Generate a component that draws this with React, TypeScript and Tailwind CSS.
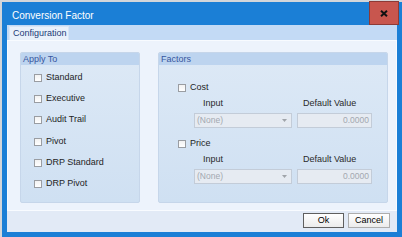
const font = { fontFamily: '"Liberation Sans", Arial, sans-serif' };

const Box = () => (
  <span className="inline-block w-[8px] h-[8px] shrink-0 border border-[#9a9da2] bg-gradient-to-b from-[#f2f2f2] to-white" />
);

const Check = ({ label }: { label: string }) => (
  <div className="flex items-center gap-[4px] h-[21.3px]">
    <Box />
    <span className="text-[9px] text-[#1e1e1e]">{label}</span>
  </div>
);

const FactorBlock = ({ label, first }: { label: string; first?: boolean }) => (
  <div className={first ? 'pt-[16px]' : 'pt-[9px]'}>
    <div className="flex items-center gap-[4px] h-[14px] pl-[19px]">
      <Box />
      <span className="text-[9px] text-[#1e1e1e]">{label}</span>
    </div>
    <div className="flex gap-[5px] pl-[35px] mt-[2px] h-[14px] items-center">
      <span className="w-[98px] pl-[9px] text-[9px] text-[#2a2a2a]">Input</span>
      <span className="w-[75px] pl-[6px] text-[9px] text-[#2a2a2a]">Default Value</span>
    </div>
    <div className="flex gap-[5px] pl-[35px] mt-[2px]">
      <div className="w-[98px] h-[15px] border border-[#c3ccd8] bg-[#e6ebf2] flex items-center justify-between px-[2px]">
        <span className="text-[8.5px] text-[#a3a8b0]">(None)</span>
        <svg width="5" height="3" viewBox="0 0 5 3" className="mr-[2px]">
          <path d="M0 0h5L2.5 3z" fill="#a0a4aa" />
        </svg>
      </div>
      <div className="w-[75px] h-[15px] border border-[#c3ccd8] bg-[#e6ebf2] flex items-center justify-end px-[2px]">
        <span className="text-[8.5px] text-[#a3a8b0]">0.0000</span>
      </div>
    </div>
  </div>
);

const Group = ({ title, width, children }: { title: string; width: string; children: React.ReactNode }) => (
  <div className={`${width} h-[151px] flex flex-col rounded-[2px] border border-[#c6d6ea] bg-gradient-to-b from-[#dde9f6] to-[#cfe0f2] overflow-hidden`}>
    <div className="h-[12px] shrink-0 bg-[#bdd4ef] flex items-center pl-[2px]">
      <span className="text-[9px] text-[#3756a0] leading-none">{title}</span>
    </div>
    <div className="flex-1">{children}</div>
  </div>
);

export default function App() {
  return (
    <div className="w-[402px] h-[237px] bg-[#d3d6da] pt-[2px] pl-[2px] overflow-hidden" style={font}>
      <div className="w-[400px] h-[235px] bg-[#1b7fd6] flex flex-col px-[5px] pb-[5px]">
        {/* title bar */}
        <div className="h-[23px] shrink-0 flex items-start justify-between">
          <span className="text-[10px] text-white mt-[6px] ml-[5px]">Conversion Factor</span>
          <div className="w-[30px] h-[24px] -mt-[1px] -mr-[2px] bg-[#c8564e] border border-[#8d3a36] flex items-center justify-center">
            <svg width="8" height="7" viewBox="0 0 8 7">
              <path d="M1 0.8L7 6.2M7 0.8L1 6.2" stroke="#111" strokeWidth="2" />
            </svg>
          </div>
        </div>

        {/* content */}
        <div className="flex-1 flex flex-col bg-[#e2eaf6]">
          <div className="h-[15px] shrink-0 bg-[#c3daf5] flex items-end pl-[2px]">
            <div className="w-[60px] h-[14px] bg-[#e9f1fb] border-t border-l border-r border-[#d8e5f5] flex items-center pl-[3px]">
              <span className="text-[9px] text-[#1c3b77]">Configuration</span>
            </div>
          </div>

          <div className="h-[171px] shrink-0 bg-[#edf3fc] border border-[#f8fbff] flex pl-[12px] pt-[11px] gap-[18px]">
            <Group title="Apply To" width="w-[120px]">
              <div className="pt-[2px] pl-[13px]">
                <Check label="Standard" />
                <Check label="Executive" />
                <Check label="Audit Trail" />
                <Check label="Pivot" />
                <Check label="DRP Standard" />
                <Check label="DRP Pivot" />
              </div>
            </Group>
            <Group title="Factors" width="w-[230px]">
              <FactorBlock label="Cost" first />
              <FactorBlock label="Price" />
            </Group>
          </div>

          <div className="flex-1 flex justify-end items-start gap-[4px] pt-[2px] pr-[7px]">
            <button className="w-[41px] h-[15px] border border-[#5f5f5f] bg-gradient-to-b from-white to-[#ececec] text-[9px] text-black flex items-center justify-center">
              Ok
            </button>
            <button className="w-[42px] h-[15px] border border-[#adadad] bg-gradient-to-b from-white to-[#ececec] text-[9px] text-black flex items-center justify-center">
              Cancel
            </button>
          </div>
        </div>
      </div>
    </div>
  );
}
